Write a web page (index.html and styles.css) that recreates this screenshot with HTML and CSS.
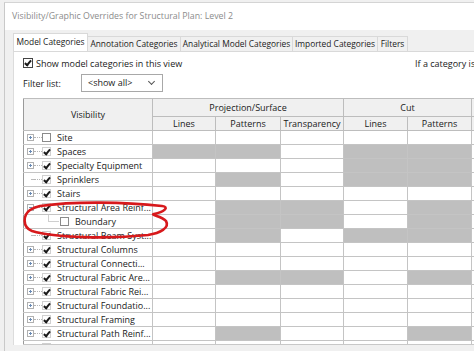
FILE: index.html
```html
<!DOCTYPE html>
<html lang="en">
<head>
  <meta charset="UTF-8">
  <title>Visibility/Graphic Overrides</title>
  <link rel="stylesheet" href="styles.css">
</head>
<body>
  <div class="window">
    <div class="title">Visibility/Graphic Overrides for Structural Plan: Level 2</div>

    <div class="tabs">
      <div class="tab active" style="width:75px">Model Categories</div>
      <div class="tab" style="width:94px">Annotation Categories</div>
      <div class="tab" style="width:113px">Analytical Model Categories</div>
      <div class="tab" style="width:86px">Imported Categories</div>
      <div class="tab" style="width:31px">Filters</div>
    </div>

    <div class="panel">
      <div class="option-row">
        <label class="show-label"><span class="cb checked"></span>Show model categories in this view</label>
        <span class="note">If a category is unchecked, it will not be visible.</span>
      </div>

      <div class="filter-row">
        <span class="filter-label">Filter list:</span>
        <div class="select">&lt;show all&gt;<span class="chevron"></span></div>
      </div>

      <div class="grid-wrap">
        <table class="grid">
          <colgroup>
            <col style="width:129px">
            <col style="width:63px">
            <col style="width:65px">
            <col style="width:63px">
            <col style="width:64px">
            <col style="width:64px">
            <col style="width:40px">
          </colgroup>
          <thead>
            <tr class="head1">
              <th rowspan="2">Visibility</th>
              <th colspan="3">Projection/Surface</th>
              <th colspan="2">Cut</th>
              <th></th>
            </tr>
            <tr class="head2">
              <th>Lines</th>
              <th>Patterns</th>
              <th>Transparency</th>
              <th>Lines</th>
              <th>Patterns</th>
              <th></th>
            </tr>
          </thead>
          <tbody>
            <tr>
              <td><div class="node"><span class="exp plus"></span><span class="dots"></span><span class="cb"></span>Site</div></td>
              <td></td><td></td><td></td><td></td><td></td><td></td>
            </tr>
            <tr>
              <td><div class="node"><span class="exp plus"></span><span class="dots"></span><span class="cb checked"></span>Spaces</div></td>
              <td class="g"></td><td class="g"></td><td></td><td class="g"></td><td class="g"></td><td></td>
            </tr>
            <tr>
              <td><div class="node"><span class="exp plus"></span><span class="dots"></span><span class="cb checked"></span>Specialty Equipment</div></td>
              <td></td><td></td><td></td><td class="g"></td><td class="g"></td><td></td>
            </tr>
            <tr>
              <td><div class="node"><span class="exp none"></span><span class="dots"></span><span class="cb checked"></span>Sprinklers</div></td>
              <td></td><td class="g"></td><td></td><td class="g"></td><td class="g"></td><td></td>
            </tr>
            <tr>
              <td><div class="node"><span class="exp plus"></span><span class="dots"></span><span class="cb checked"></span>Stairs</div></td>
              <td></td><td></td><td></td><td></td><td></td><td></td>
            </tr>
            <tr>
              <td><div class="node"><span class="exp"></span><span class="dots"></span><span class="cb checked"></span>Structural Area Reinf...</div></td>
              <td></td><td class="g"></td><td class="g"></td><td></td><td class="g"></td><td></td>
            </tr>
            <tr>
              <td><div class="node child"><span class="branch"></span><span class="cb"></span>Boundary</div></td>
              <td></td><td class="g"></td><td class="g"></td><td></td><td class="g"></td><td></td>
            </tr>
            <tr>
              <td><div class="node"><span class="exp none"></span><span class="dots"></span><span class="cb checked"></span>Structural Beam Syst...</div></td>
              <td></td><td class="g"></td><td></td><td class="g"></td><td class="g"></td><td></td>
            </tr>
            <tr>
              <td><div class="node"><span class="exp plus"></span><span class="dots"></span><span class="cb checked"></span>Structural Columns</div></td>
              <td></td><td></td><td></td><td></td><td></td><td></td>
            </tr>
            <tr>
              <td><div class="node"><span class="exp plus"></span><span class="dots"></span><span class="cb checked"></span>Structural Connecti...</div></td>
              <td></td><td></td><td></td><td></td><td></td><td></td>
            </tr>
            <tr>
              <td><div class="node"><span class="exp plus"></span><span class="dots"></span><span class="cb checked"></span>Structural Fabric Are...</div></td>
              <td></td><td class="g"></td><td class="g"></td><td></td><td class="g"></td><td></td>
            </tr>
            <tr>
              <td><div class="node"><span class="exp plus"></span><span class="dots"></span><span class="cb checked"></span>Structural Fabric Rei...</div></td>
              <td></td><td></td><td></td><td></td><td></td><td></td>
            </tr>
            <tr>
              <td><div class="node"><span class="exp plus"></span><span class="dots"></span><span class="cb checked"></span>Structural Foundatio...</div></td>
              <td></td><td></td><td></td><td></td><td></td><td></td>
            </tr>
            <tr>
              <td><div class="node"><span class="exp plus"></span><span class="dots"></span><span class="cb checked"></span>Structural Framing</div></td>
              <td></td><td></td><td></td><td></td><td></td><td></td>
            </tr>
            <tr>
              <td><div class="node"><span class="exp plus"></span><span class="dots"></span><span class="cb checked"></span>Structural Path Reinf...</div></td>
              <td></td><td class="g"></td><td></td><td></td><td class="g"></td><td></td>
            </tr>
            <tr>
              <td><div class="node"><span class="exp plus"></span><span class="dots"></span><span class="cb checked"></span>Structural Rebar</div></td>
              <td></td><td></td><td></td><td></td><td></td><td></td>
            </tr>
          </tbody>
        </table>
      </div>
    </div>
  </div>

  <!-- red markup drawn on top of the screenshot -->
  <svg class="markup" width="474" height="351" viewBox="0 0 474 351">
    <path d="M40 206 C75 201 125 202 162 206 C170 207 164 212 154 214 C150 215 162 216 166 221 C170 228 160 233 148 235 C110 239 55 238 32 231 C22 227 23 215 30 210 C33 208 36 207 40 206"
          fill="none" stroke="#d7191c" stroke-width="2.6" stroke-linecap="round"/>
  </svg>
</body>
</html>
```

FILE: styles.css
```css
body {
  margin: 0;
  background: #f0f0f0;
  font-family: "Open Sans", "Noto Sans", sans-serif;
  font-size: 9px;
  color: #1a1a1a;
  overflow: hidden;
}
.window {
  margin: 2px 0 0 4px;
  height: 360px;
  background: #f0f0f0;
  border-left: 1px solid #c9c9c9;
  border-top: 1px solid #d4d4d4;
}
.title {
  height: 27px;
  line-height: 27px;
  padding-left: 7px;
  background: #fff;
  color: #8c8c8c;
  font-size: 8.8px;
  white-space: nowrap;
}
.tabs {
  display: flex;
  align-items: flex-end;
  height: 21px;
  padding-left: 8px;
  background: #f0f0f0;
  font-size: 8.4px;
}
.tab {
  box-sizing: border-box;
  height: 15px;
  line-height: 14px;
  text-align: center;
  border: 1px solid #d9d9d9;
  border-bottom: none;
  margin-right: -1px;
  white-space: nowrap;
  background: #f0f0f0;
}
.tab.active {
  height: 18px;
  line-height: 16px;
  background: #fff;
  position: relative;
  z-index: 1;
}
.panel {
  margin-left: 8px;
  padding-left: 9px;
  background: #fff;
  border-left: 1px solid #dcdcdc;
  border-top: 1px solid #d9d9d9;
}
.option-row {
  display: flex;
  align-items: center;
  height: 12px;
  margin-top: 5px;
  white-space: nowrap;
  overflow: hidden;
}
.show-label {
  display: flex;
  align-items: center;
  width: 392px;
  flex: none;
}
.show-label .cb.checked {
  width: 10px;
  height: 10px;
  margin-right: 3px;
  border-color: #444;
}
.filter-row {
  display: flex;
  align-items: center;
  height: 18px;
  margin-top: 5px;
}
.filter-label {
  width: 58px;
}
.select {
  box-sizing: border-box;
  width: 82px;
  height: 18px;
  line-height: 16px;
  padding-left: 6px;
  border: 1px solid #a8a8a8;
  position: relative;
}
.chevron {
  position: absolute;
  right: 8px;
  top: 4px;
  width: 4px;
  height: 4px;
  border-right: 1px solid #555;
  border-bottom: 1px solid #555;
  transform: rotate(45deg);
}
.grid-wrap {
  margin-top: 6px;
  height: 246px;
  overflow: hidden;
  border-bottom: 1px solid #c8c8c8;
}
.grid {
  border-collapse: collapse;
  table-layout: fixed;
  width: 488px;
}
.grid th {
  background: #f0f0f0;
  border: 1px solid #bdbdbd;
  font-weight: normal;
  padding: 0;
  white-space: nowrap;
  overflow: hidden;
}
.grid th[rowspan] {
  border-left-color: #9a9a9a;
}
.head1 {
  height: 18px;
}
.head2 {
  height: 14px;
}
.grid td {
  border: 1px solid #c4c4c4;
  padding: 0;
  height: 13px;
  white-space: nowrap;
  overflow: hidden;
}
.grid td:first-child {
  border-left-color: #9a9a9a;
}
.grid td.g {
  background: #bfbfbf;
}
.node {
  display: flex;
  align-items: center;
  height: 13px;
  padding-left: 3px;
}
.exp {
  box-sizing: border-box;
  width: 7px;
  height: 7px;
  border: 1px solid #b0b0b0;
  position: relative;
  flex: none;
}
.exp::before {
  content: "";
  position: absolute;
  left: 1px;
  top: 2px;
  width: 3px;
  height: 1px;
  background: #6a8bb5;
}
.exp.plus::after {
  content: "";
  position: absolute;
  left: 2px;
  top: 1px;
  width: 1px;
  height: 3px;
  background: #6a8bb5;
}
.exp.none {
  border: none;
}
.exp.none::before {
  left: 4px;
  top: 3px;
  width: 3px;
  background: #bbb;
}
.dots {
  width: 8px;
  border-top: 1px dotted #b5b5b5;
  flex: none;
}
.cb {
  box-sizing: border-box;
  width: 9px;
  height: 9px;
  border: 1px solid #8a8a8a;
  margin-right: 6px;
  position: relative;
  flex: none;
}
.cb.checked {
  border-color: #d0d0d0;
}
.cb.checked::after {
  content: "";
  position: absolute;
  left: 2px;
  top: 0;
  width: 2px;
  height: 5px;
  border-right: 2px solid #1a1a1a;
  border-bottom: 2px solid #1a1a1a;
  transform: rotate(40deg);
}
.node.child {
  padding-left: 24px;
}
.branch {
  width: 10px;
  height: 8px;
  margin-top: -8px;
  border-left: 1px solid #cfcfcf;
  border-bottom: 1px solid #cfcfcf;
  margin-right: 1px;
  flex: none;
}
.markup {
  position: absolute;
  top: 0;
  left: 0;
  pointer-events: none;
}
```
